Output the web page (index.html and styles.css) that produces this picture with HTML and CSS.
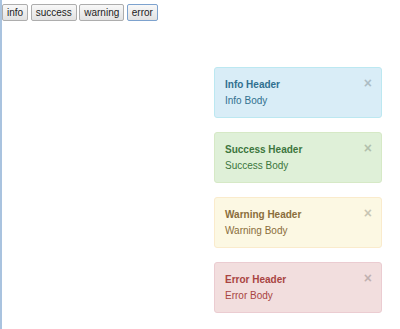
FILE: index.html
```html
<!DOCTYPE html>
<html lang="en">
<head>
  <meta charset="UTF-8">
  <title>Toasts</title>
  <link rel="stylesheet" href="styles.css">
</head>
<body>
  <div class="toolbar">
    <button class="btn">info</button>
    <button class="btn">success</button>
    <button class="btn">warning</button>
    <button class="btn btn-focus">error</button>
  </div>

  <div class="toast-container">
    <div class="toast toast-info">
      <span class="toast-close">&times;</span>
      <div class="toast-title">Info Header</div>
      <div class="toast-message">Info Body</div>
    </div>
    <div class="toast toast-success">
      <span class="toast-close">&times;</span>
      <div class="toast-title">Success Header</div>
      <div class="toast-message">Success Body</div>
    </div>
    <div class="toast toast-warning">
      <span class="toast-close">&times;</span>
      <div class="toast-title">Warning Header</div>
      <div class="toast-message">Warning Body</div>
    </div>
    <div class="toast toast-error">
      <span class="toast-close">&times;</span>
      <div class="toast-title">Error Header</div>
      <div class="toast-message">Error Body</div>
    </div>
  </div>
</body>
</html>
```

FILE: styles.css
```css
html, body {
  height: 100%;
}
body {
  margin: 0;
  font-family: "Liberation Sans", Arial, sans-serif;
  background: #fff;
  border-left: 2px solid #a9c3df;
  box-sizing: border-box;
}
.toolbar {
  display: flex;
  gap: 2.5px;
  padding: 4px 0 0 0;
}
.btn {
  font-family: "Liberation Sans", Arial, sans-serif;
  font-size: 10px;
  color: #222;
  height: 17px;
  padding: 0 4px;
  border: 1px solid #adadad;
  border-radius: 2px;
  background: linear-gradient(#f8f8f8, #e2e2e2);
}
.btn-focus {
  border-color: #7da2ce;
}
.toast-container {
  position: absolute;
  top: 67px;
  right: 18px;
  width: 168px;
  display: flex;
  flex-direction: column;
  gap: 14px;
}
.toast {
  position: relative;
  border: 1px solid;
  border-radius: 3px;
  padding: 9px 10px 8px 10px;
  font-size: 10px;
  line-height: 16px;
}
.toast-title {
  font-weight: bold;
}
.toast-close {
  position: absolute;
  top: 7px;
  right: 9px;
  font-size: 14px;
  font-weight: bold;
  color: #000;
  opacity: 0.2;
}
.toast-info {
  background: #d9edf7;
  border-color: #bce8f1;
  color: #31708f;
}
.toast-success {
  background: #dff0d8;
  border-color: #d6e9c6;
  color: #3c763d;
}
.toast-warning {
  background: #fcf8e3;
  border-color: #faebcc;
  color: #8a6d3b;
}
.toast-error {
  background: #f2dede;
  border-color: #ebccd1;
  color: #a94442;
}
```
